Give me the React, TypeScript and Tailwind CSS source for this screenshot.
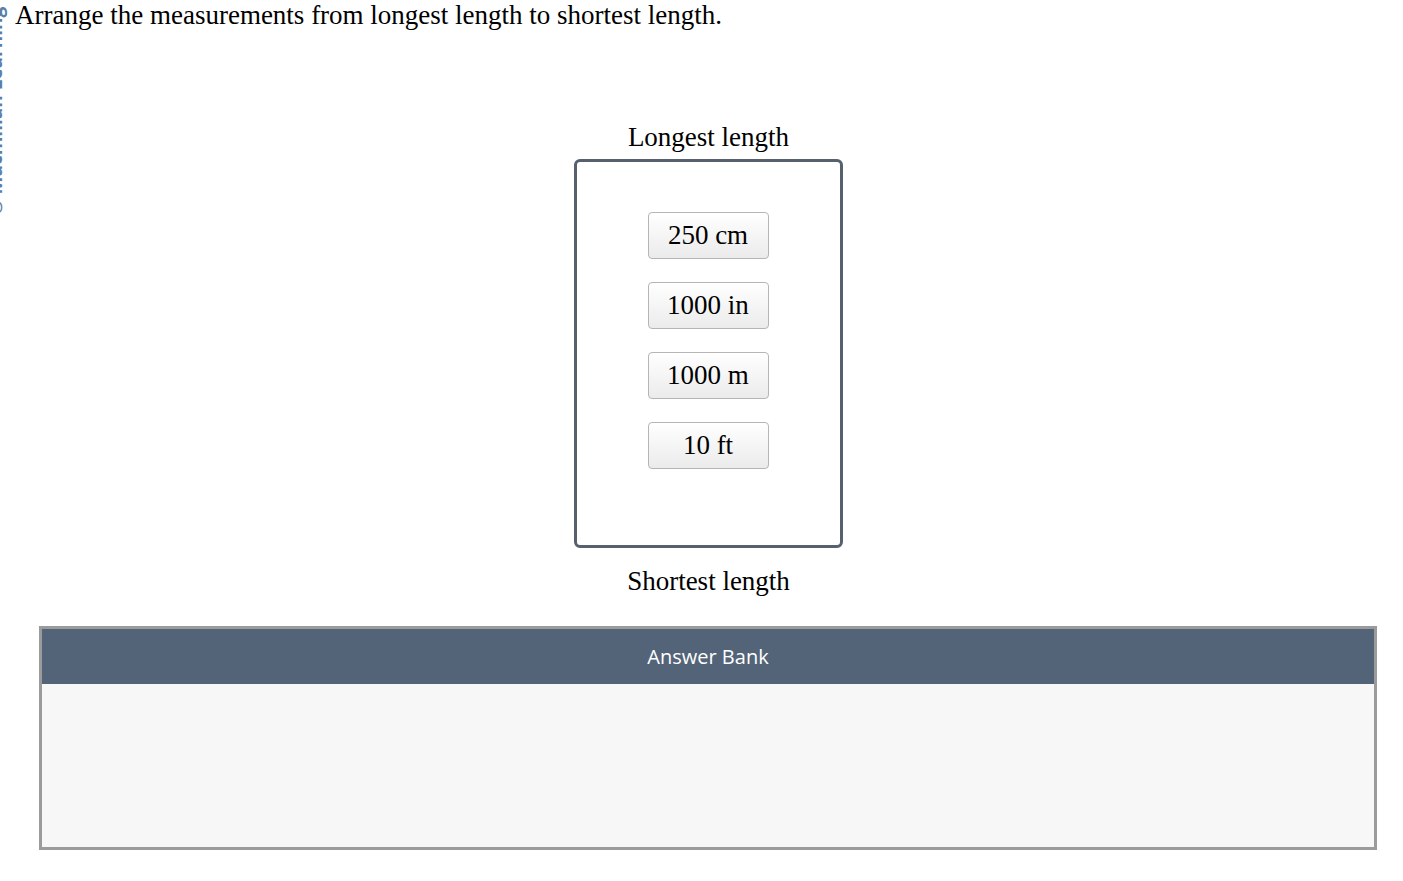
const serif = { fontFamily: '"Liberation Serif", "Times New Roman", serif' };

const items = ['250 cm', '1000 in', '1000 m', '10 ft'];

function Tile({ label }: { label: string }) {
  return (
    <div
      className="w-[121px] h-[47px] flex items-center justify-center rounded-[4px] border border-[#b5b5b5] bg-gradient-to-b from-white to-[#ebebeb] text-[27px] text-black"
      style={serif}
    >
      {label}
    </div>
  );
}

export default function App() {
  return (
    <div className="relative w-[1403px] h-[881px] overflow-hidden bg-white">
      {/* copyright strip running up the left edge, mostly off-page */}
      <div className="absolute left-[-105px] top-[104px] w-[200px] h-[14px] -rotate-90 flex items-center justify-center">
        <span
          className="text-[19px] leading-none font-bold text-[#5b7ea6] whitespace-nowrap"
          style={{ fontFamily: '"Open Sans", sans-serif' }}
        >
          © Macmillan Learning
        </span>
      </div>

      <p className="pl-[15px] text-[27px] leading-[30px] text-black" style={serif}>
        Arrange the measurements from longest length to shortest length.
      </p>

      <div className="ml-[39px] w-[1338px]">
        <div className="flex flex-col items-center pt-[91px]">
          <div className="text-[27px] leading-[32px] text-black pl-px" style={serif}>
            Longest length
          </div>
          <div className="mt-[6px] w-[269px] h-[389px] rounded-[6px] border-[3px] border-[#56606e] flex flex-col items-center gap-[23px] pt-[50px]">
            {items.map((label) => (
              <Tile key={label} label={label} />
            ))}
          </div>
          <div className="mt-[17px] text-[27px] leading-[32px] text-black pl-px" style={serif}>
            Shortest length
          </div>
        </div>

        <div className="mt-[29px] h-[224px] border-[3px] border-[#9b9b9b] flex flex-col">
          <div
            className="h-[55px] bg-[#536479] flex items-center justify-center text-white text-[20px] font-medium"
            style={{ fontFamily: '"Open Sans", sans-serif' }}
          >
            Answer Bank
          </div>
          <div className="flex-1 bg-[#f7f7f7]" />
        </div>
      </div>
    </div>
  );
}
